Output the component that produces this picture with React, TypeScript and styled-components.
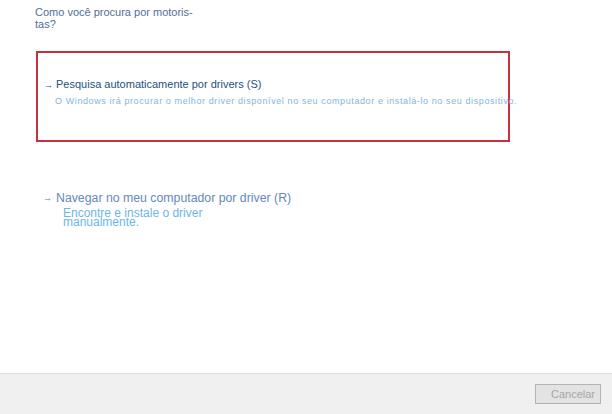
import React from 'react';
import styled, { createGlobalStyle } from 'styled-components';

const GlobalStyle = createGlobalStyle`
  html, body {
    margin: 0;
    padding: 0;
    background: #ffffff;
  }
  body {
    font-family: 'Liberation Sans', Arial, sans-serif;
  }
`;

const Window = styled.div`
  width: 612px;
  height: 414px;
  display: flex;
  flex-direction: column;
  background: #ffffff;
  overflow: hidden;
`;

const Content = styled.main`
  flex: 1;
  display: flex;
  flex-direction: column;
  padding: 7px 0 0 35px;
`;

const Title = styled.h1`
  margin: 0;
  width: 170px;
  font-size: 11px;
  font-weight: normal;
  line-height: 11.5px;
  color: #4f6f9c;
`;

const OptionBox = styled.div<{ $selected?: boolean }>`
  display: flex;
  flex-direction: column;
  box-sizing: border-box;
  width: ${(p) => (p.$selected ? '474px' : 'auto')};
  height: ${(p) => (p.$selected ? '91px' : 'auto')};
  border: 2px solid ${(p) => (p.$selected ? '#c8303c' : 'transparent')};
  padding: ${(p) => (p.$selected ? '25px 0 0 6px' : '0 0 0 6px')};
  margin: ${(p) => (p.$selected ? '21px 0 0 1px' : '47px 0 0 0')};
`;

const OptionHead = styled.div`
  display: flex;
  align-items: center;
`;

const Arrow = styled.span<{ $color: string; $gap: number }>`
  width: 8px;
  margin-right: ${(p) => p.$gap}px;
  font-size: 9px;
  color: ${(p) => p.$color};
`;

const OptionTitle = styled.span<{ $size: number; $color: string }>`
  font-size: ${(p) => p.$size}px;
  line-height: ${(p) => Math.round(p.$size) + 2}px;
  color: ${(p) => p.$color};
`;

const OptionDesc = styled.div<{
  $size: number;
  $color: string;
  $indent: number;
  $width?: number;
  $spacing?: number;
}>`
  margin: 4px 0 0 ${(p) => p.$indent}px;
  width: ${(p) => (p.$width ? `${p.$width}px` : 'auto')};
  white-space: ${(p) => (p.$width ? 'normal' : 'nowrap')};
  font-size: ${(p) => p.$size}px;
  line-height: ${(p) => (p.$width ? '9px' : '12px')};
  letter-spacing: ${(p) => p.$spacing ?? 0}px;
  color: ${(p) => p.$color};
`;

const Footer = styled.footer`
  height: 40px;
  flex-shrink: 0;
  display: flex;
  align-items: center;
  justify-content: flex-end;
  padding-right: 11px;
  background: #f0f0f0;
  border-top: 1px solid #dfdfdf;
`;

const CancelButton = styled.button`
  width: 66px;
  height: 20px;
  padding: 0 0 0 10px;
  border: 1px solid #b4b4b4;
  background: #e3e3e3;
  color: #a6a6a6;
  font-family: 'Liberation Sans', Arial, sans-serif;
  font-size: 11px;
  text-align: center;
`;

export default function App() {
  return (
    <>
      <GlobalStyle />
      <Window>
        <Content>
          <Title>Como você procura por motoris- tas?</Title>

          <OptionBox $selected>
            <OptionHead>
              <Arrow $color="#1f4f80" $gap={4}>→</Arrow>
              <OptionTitle $size={11} $color="#25507f">
                Pesquisa automaticamente por drivers (S)
              </OptionTitle>
            </OptionHead>
            <OptionDesc $size={9} $color="#86b4da" $indent={11} $spacing={0.6}>
              O Windows irá procurar o melhor driver disponível no seu computador e instalá-lo no seu dispositivo.
            </OptionDesc>
          </OptionBox>

          <OptionBox>
            <OptionHead>
              <Arrow $color="#4f7fb8" $gap={5}>→</Arrow>
              <OptionTitle $size={12.3} $color="#6489bb">
                Navegar no meu computador por driver (R)
              </OptionTitle>
            </OptionHead>
            <OptionDesc $size={12} $color="#6cb6e6" $indent={20} $width={150}>
              Encontre e instale o driver manualmente.
            </OptionDesc>
          </OptionBox>
        </Content>
        <Footer>
          <CancelButton disabled>Cancelar</CancelButton>
        </Footer>
      </Window>
    </>
  );
}
